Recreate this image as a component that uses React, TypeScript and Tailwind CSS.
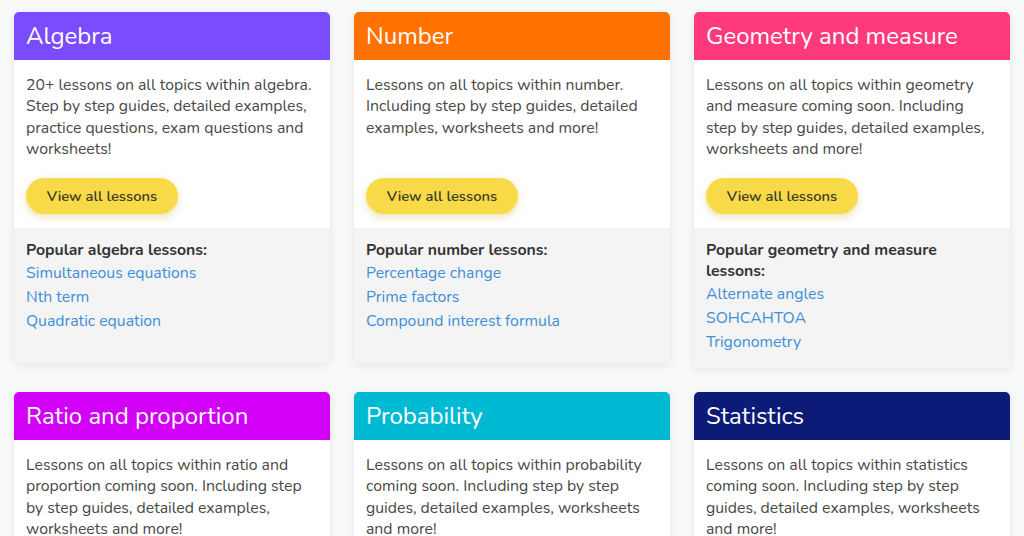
const CARDS = [
  {
    title: "Algebra",
    color: "bg-[#7b4cfe]",
    lines: [
      "20+ lessons on all topics within algebra.",
      "Step by step guides, detailed examples,",
      "practice questions, exam questions and",
      "worksheets!",
    ],
    popular: ["Popular algebra lessons:"],
    links: ["Simultaneous equations", "Nth term", "Quadratic equation"],
  },
  {
    title: "Number",
    color: "bg-[#ff7200]",
    lines: [
      "Lessons on all topics within number.",
      "Including step by step guides, detailed",
      "examples, worksheets and more!",
    ],
    popular: ["Popular number lessons:"],
    links: ["Percentage change", "Prime factors", "Compound interest formula"],
  },
  {
    title: "Geometry and measure",
    color: "bg-[#fe3a7c]",
    lines: [
      "Lessons on all topics within geometry",
      "and measure coming soon. Including",
      "step by step guides, detailed examples,",
      "worksheets and more!",
    ],
    popular: ["Popular geometry and measure", "lessons:"],
    links: ["Alternate angles", "SOHCAHTOA", "Trigonometry"],
  },
  {
    title: "Ratio and proportion",
    color: "bg-[#d200f6]",
    lines: [
      "Lessons on all topics within ratio and",
      "proportion coming soon. Including step",
      "by step guides, detailed examples,",
      "worksheets and more!",
    ],
  },
  {
    title: "Probability",
    color: "bg-[#00b9d3]",
    lines: [
      "Lessons on all topics within probability",
      "coming soon. Including step by step",
      "guides, detailed examples, worksheets",
      "and more!",
    ],
  },
  {
    title: "Statistics",
    color: "bg-[#0c1a78]",
    lines: [
      "Lessons on all topics within statistics",
      "coming soon. Including step by step",
      "guides, detailed examples, worksheets",
      "and more!",
    ],
  },
];

type Card = (typeof CARDS)[number];

function TopicCard({ card }: { card: Card }) {
  return (
    <div className="rounded-[5px] bg-white shadow-[0_2px_10px_rgba(0,0,0,0.09)] overflow-hidden">
      <div className={`${card.color} h-12 px-3 flex items-center`}>
        <h2 className="text-[24px] text-white leading-none pb-[1px]">{card.title}</h2>
      </div>

      <div className="px-3 pt-[15px] pb-[14px]">
        <p className="min-h-[85px] text-[15.8px] leading-[21.3px] text-[#484848]">
          {card.lines.map((line, i) => (
            <span key={i} className="block whitespace-nowrap">{line}</span>
          ))}
        </p>
        <button className="mt-[18px] h-9 w-[152px] rounded-full bg-[#f8da48] text-[14.8px] font-semibold text-[#3a3a2a] shadow-[0_3px_8px_rgba(200,170,40,0.35)]">
          View all lessons
        </button>
      </div>

      {card.popular && (
        <div className="bg-[#f4f4f4] px-3 pt-[12px] pb-[14px] min-h-[135px]">
          <div className="text-[15.8px] leading-[21px] font-bold text-[#333]">
            {card.popular.map((l, i) => (
              <span key={i} className="block">{l}</span>
            ))}
          </div>
          <ul>
            {card.links?.map(link => (
              <li key={link} className="text-[15.8px] leading-[24px] text-[#3d8ed8]">
                <a href="#">{link}</a>
              </li>
            ))}
          </ul>
        </div>
      )}
    </div>
  );
}

export default function App() {
  return (
    <div className="min-h-screen bg-[#f8f9f9] font-['Nunito','Lato',sans-serif] px-[14px] pt-3 pb-10">
      <div className="grid grid-cols-[316px_316px_316px] gap-x-[24px] gap-y-[24px] items-start">
        {CARDS.map(card => (
          <TopicCard key={card.title} card={card} />
        ))}
      </div>
    </div>
  );
}
